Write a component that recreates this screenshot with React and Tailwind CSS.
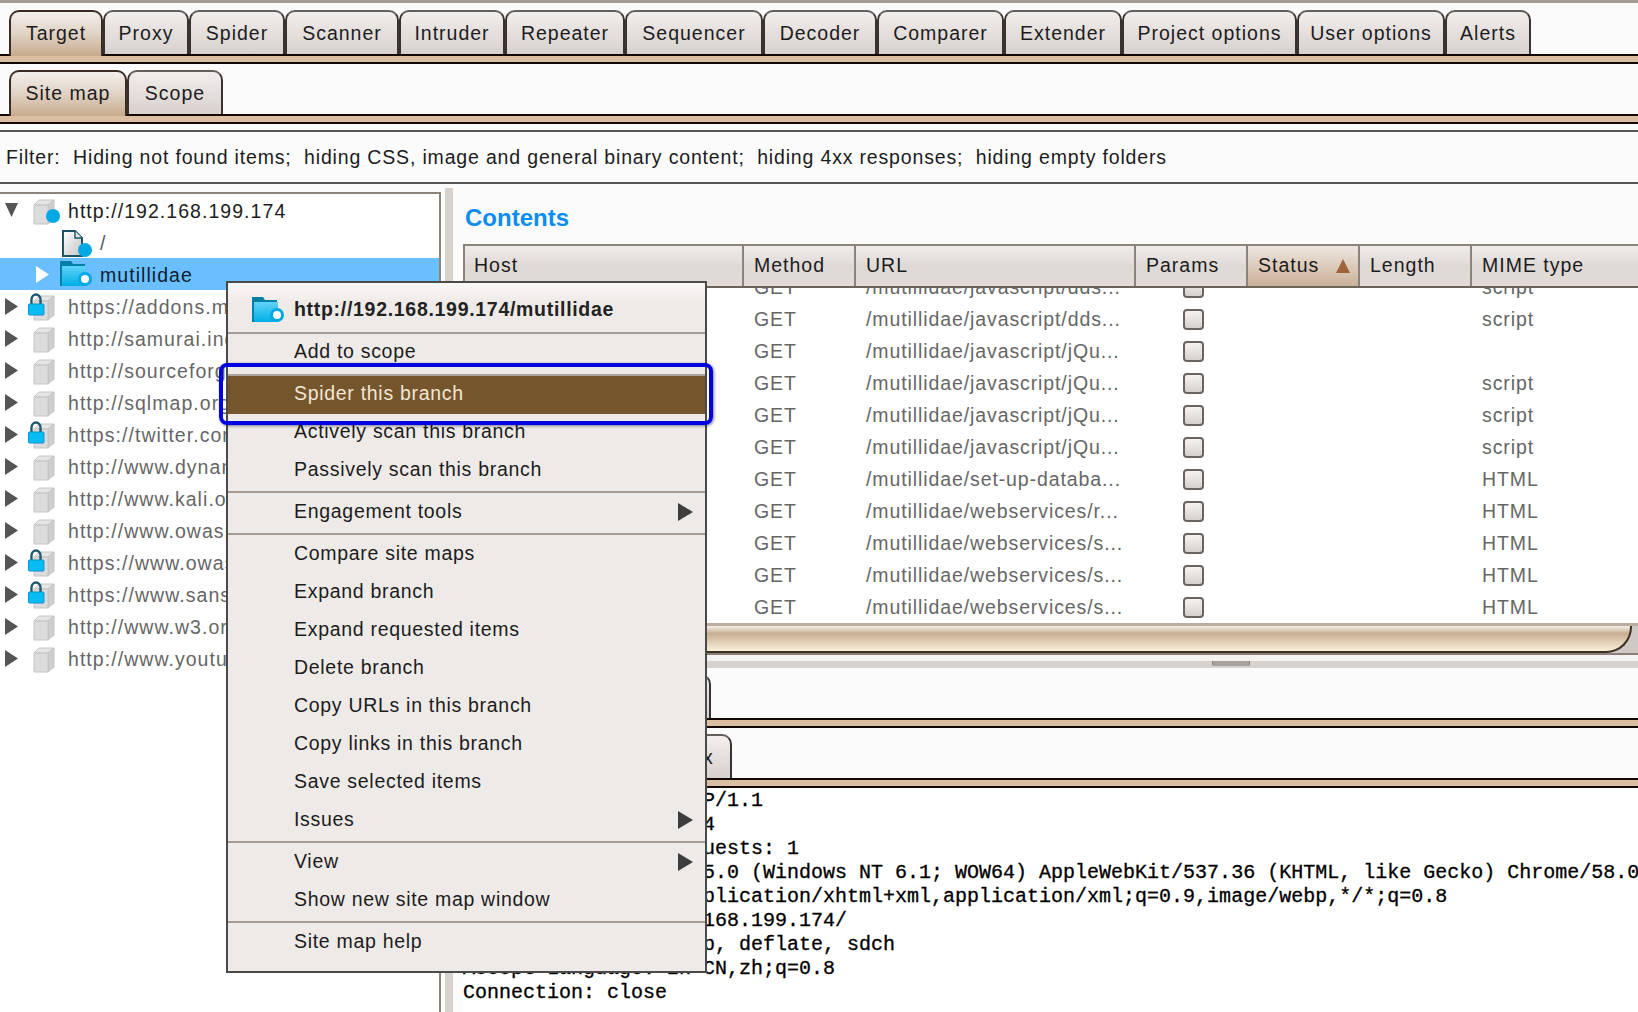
const SANS = "font-['Liberation_Sans',Arial,sans-serif] tracking-[0.7px]";

function Tab({ label, width, active, pad }) {
  return (
    <div
      style={{ width }}
      className={
        "h-[44px] shrink-0 flex items-center rounded-t-[10px] border-x-2 border-t-2 text-[#1c1c1c] text-[19.5px] tracking-[1px] pt-[1px] " +
        (pad ? "pl-[14px] " : "justify-center ") +
        (active
          ? "relative z-10 -mb-[2px] h-[46px] border-[#3a2c22] bg-gradient-to-b from-[#f3efeb] via-[#e0d2c4] to-[#c7aa8d] pb-[2px]"
          : "border-x-[#3a3230] border-t-[#655f5c] bg-gradient-to-b from-[#f1eeec] to-[#d8d1ce]")
      }
    >
      {label}
    </div>
  );
}

function Band() {
  return <div className="h-[10px] shrink-0 border-y-2 border-t-[#140806] border-b-[#140806] bg-[#dcbfa3]" />;
}

function TabStrip({ tabs, pl = 9 }) {
  return (
    <div className="flex items-end" style={{ paddingLeft: pl }}>
      {tabs.map((t) => (
        <Tab key={t.label} {...t} />
      ))}
    </div>
  );
}

function RightArrow({ className = "fill-[#555555]", w = 13, h = 17 }) {
  return (
    <svg width={w} height={h} viewBox="0 0 13 17" preserveAspectRatio="none" className={"shrink-0 " + className}>
      <path d="M0 0 L13 8.5 L0 17 Z" />
    </svg>
  );
}

function DownArrow() {
  return (
    <svg width="13" height="14" viewBox="0 0 13 14" className="shrink-0 fill-[#555555]">
      <path d="M0 0 H13 L6.5 14 Z" />
    </svg>
  );
}

function Cube() {
  return (
    <g stroke="#c4c4c4" strokeWidth="1">
      <path d="M6 11 L11 6 H26 L20 11 Z" fill="#e6e6e6" />
      <path d="M20 11 L26 6 V25 L20 30 Z" fill="#cfcfcf" />
      <path d="M6 11 H20 V30 H6 Z" fill="#dcdcdc" />
    </g>
  );
}

function HostIcon({ kind }) {
  return (
    <svg width="40" height="32" viewBox="0 0 40 32" className="shrink-0">
      <Cube />
      {kind === "dot" && <circle cx="25" cy="22" r="7" fill="#00a9e6" />}
      {kind === "lock" && (
        <g>
          <path d="M3.5 15 V9.5 a4.5 5 0 0 1 9 0 V15" fill="none" stroke="#1f5a72" strokeWidth="2.4" />
          <rect x="0.5" y="14" width="15.5" height="11" rx="1" fill="#08bdf5" stroke="#0a93c4" />
        </g>
      )}
    </svg>
  );
}

function FileIcon() {
  return (
    <svg width="38" height="32" viewBox="0 0 38 32" className="shrink-0">
      <defs>
        <linearGradient id="fg" x1="0" x2="1" y1="0" y2="1">
          <stop offset="0" stopColor="#ffffff" />
          <stop offset="1" stopColor="#c4c4c4" />
        </linearGradient>
      </defs>
      <path d="M1 5 H13 L20 12 V30 H1 Z" fill="url(#fg)" stroke="#1c5466" strokeWidth="2" />
      <path d="M13 5 V12 H20" fill="#e6e6e6" stroke="#1c5466" strokeWidth="1.4" />
      <circle cx="23" cy="24" r="7" fill="#00a9e6" />
    </svg>
  );
}

function FolderIcon() {
  return (
    <svg width="34" height="28" viewBox="0 0 34 28" className="shrink-0">
      <defs>
        <linearGradient id="fo" x1="0" x2="0" y1="0" y2="1">
          <stop offset="0" stopColor="#5fd3f8" />
          <stop offset="1" stopColor="#00aee6" />
        </linearGradient>
      </defs>
      <path d="M0 1 H11 L13 4 H25 V6 H2 V26 H0 Z" fill="#067fa6" />
      <path d="M2 6 H26 V26 H2 Z" fill="url(#fo)" />
      <circle cx="25" cy="19" r="7" fill="#00a9e6" />
      <circle cx="25" cy="19" r="4" fill="#ffffff" />
    </svg>
  );
}

const hosts = [
  ["https://addons.mozilla.org", "lock"],
  ["http://samurai.inguardians.com", ""],
  ["http://sourceforge.net", ""],
  ["http://sqlmap.org", ""],
  ["https://twitter.com", "lock"],
  ["http://www.dynamicdrive.com", ""],
  ["http://www.kali.org", ""],
  ["http://www.owasp.org", ""],
  ["https://www.owasp.org", "lock"],
  ["https://www.sans.org", "lock"],
  ["http://www.w3.org", ""],
  ["http://www.youtube.com", ""],
];

function Tree() {
  return (
    <div className="text-[19.5px] tracking-[1.05px]">
      <div className="h-[32px] flex items-center pl-[5px] text-[#1c1c1c]">
        <DownArrow />
        <div className="w-[10px]" />
        <HostIcon kind="dot" />
        <span className="pt-[3px]">http://192.168.199.174</span>
      </div>
      <div className="h-[32px] flex items-center pl-[62px] text-[#5a5a5a]">
        <FileIcon />
        <span className="pt-[3px]">/</span>
      </div>
      <div className="h-[32px] flex items-center pl-[36px] bg-[#69bfff] text-[#10202c]">
        <RightArrow className="fill-white" />
        <div className="w-[11px]" />
        <div className="w-[40px] shrink-0">
          <FolderIcon />
        </div>
        <span className="pt-[3px]">mutillidae</span>
      </div>
      {hosts.map(([h, k]) => (
        <div key={h} className="h-[32px] flex items-center pl-[5px] text-[#666666] whitespace-nowrap">
          <RightArrow />
          <div className="w-[10px]" />
          <HostIcon kind={k} />
          <span className="pt-[3px]">{h}</span>
        </div>
      ))}
    </div>
  );
}

const columns = ["Host", "Method", "URL", "Params", "Status", "Length", "MIME type"];
const gridCols = "grid grid-cols-[281px_112px_280px_112px_112px_112px_1fr]";

const rows = [
  ["/mutillidae/javascript/dds...", "script"],
  ["/mutillidae/javascript/dds...", "script"],
  ["/mutillidae/javascript/jQu...", ""],
  ["/mutillidae/javascript/jQu...", "script"],
  ["/mutillidae/javascript/jQu...", "script"],
  ["/mutillidae/javascript/jQu...", "script"],
  ["/mutillidae/set-up-databa...", "HTML"],
  ["/mutillidae/webservices/r...", "HTML"],
  ["/mutillidae/webservices/s...", "HTML"],
  ["/mutillidae/webservices/s...", "HTML"],
  ["/mutillidae/webservices/s...", "HTML"],
];

function Table() {
  return (
    <div className="flex flex-col">
      <div className={gridCols + " h-[44px] border-y-2 border-t-[#8c837b] border-b-[#6c635b] text-[19.5px] tracking-[1px] text-[#1c1c1c]"}>
        {columns.map((c, i) => (
          <div
            key={c}
            className={
              "flex items-center justify-between pr-[8px] " +
              (i === 0 ? "border-l-2 border-[#8c837b] pl-[9px] " : "pl-[10px] ") +
              (i < 6 ? "border-r-2 border-[#8c837b] " : "") +
              (c === "Status"
                ? "bg-gradient-to-b from-[#ede6df] to-[#cbb199]"
                : "bg-gradient-to-b from-[#f0edeb] via-[#dfd9d6] to-[#e2dcd9]")
            }
          >
            <span>{c}</span>
            {c === "Status" && (
              <svg width="14" height="14" viewBox="0 0 14 14" className="fill-[#a0643a]">
                <path d="M7 0 L14 14 H0 Z" />
              </svg>
            )}
          </div>
        ))}
      </div>
      <div className="h-[335px] overflow-hidden bg-white text-[19.5px] tracking-[0.9px] text-[#666666]">
        <div className="-mt-[17px]">
          {rows.map(([url, mime], i) => (
            <div key={i} className={gridCols + " h-[32px] items-center"}>
              <div className="pl-[10px] pt-[2px]">http://192.168.199.174</div>
              <div className="pl-[10px] pt-[2px]">GET</div>
              <div className="pl-[10px] pt-[2px] whitespace-nowrap">{url}</div>
              <div className="flex justify-center pl-[2px]">
                <div className="w-[21px] h-[21px] rounded-[4px] border-2 border-[#6a6460] bg-gradient-to-b from-[#f4f2f0] to-[#d8d2ce]" />
              </div>
              <div />
              <div />
              <div className="pl-[10px] pt-[2px]">{mime}</div>
            </div>
          ))}
        </div>
      </div>
      <div className="h-[30px] border-t-[3px] border-[#b9ad9f] bg-[#cfc9c6] pr-[6px]">
        <div className="h-full rounded-br-[26px] border-b-2 border-r-2 border-[#3a2e22] bg-gradient-to-b from-[#f6f0e8] via-[#c8ae92] via-30% to-[#faf0da]" />
      </div>
      <div className="h-[2px] bg-[#8a8078]" />
    </div>
  );
}

const requestLines = [
  "GET /mutillidae/ HTTP/1.1",
  "Host: 192.168.199.174",
  "Upgrade-Insecure-Requests: 1",
  "User-Agent: Mozilla/5.0 (Windows NT 6.1; WOW64) AppleWebKit/537.36 (KHTML, like Gecko) Chrome/58.0.3029.110 Safari/537.36",
  "Accept: text/html,application/xhtml+xml,application/xml;q=0.9,image/webp,*/*;q=0.8",
  "Referer: http://192.168.199.174/",
  "Accept-Encoding: gzip, deflate, sdch",
  "Accept-Language: zh-CN,zh;q=0.8",
  "Connection: close",
];

function MenuItem({ label, arrow }) {
  return (
    <div className="h-[38px] flex items-center justify-between pl-[66px] pr-[12px] pb-[2px]">
      <span>{label}</span>
      {arrow && <RightArrow className="fill-[#3d3d3d]" w={15} h={18} />}
    </div>
  );
}

function Sep() {
  return <div className="h-[2px] bg-[#a39b93] my-[1px]" />;
}

function ContextMenu() {
  return (
    <div className="absolute left-[226px] top-[281px] w-[481px] h-[692px] z-20 border-2 border-[#4a4a4a] bg-[#eeeae7] text-[19.5px] text-[#1c1c1c] overflow-hidden">
      <div className="h-[49px] flex items-center pl-[24px] pt-[4px] bg-gradient-to-b from-[#faf8f7] to-[#eeeae7] to-40% font-bold">
        <div className="w-[42px] shrink-0">
          <FolderIcon />
        </div>
        <span className="text-[#222222]">http://192.168.199.174/mutillidae</span>
      </div>
      <div className="h-[2px] bg-[#a39b93]" />
      <div className="h-[40px] flex items-center pl-[66px] pb-[4px]">Add to scope</div>
      <div className="h-[40px] flex items-center pl-[66px] border-t-2 border-[#aaa29a] bg-[#75552c] text-[#f2e6d6] pb-[3px]">Spider this branch</div>
      <MenuItem label="Actively scan this branch" />
      <MenuItem label="Passively scan this branch" />
      <Sep />
      <MenuItem label="Engagement tools" arrow />
      <Sep />
      <MenuItem label="Compare site maps" />
      <MenuItem label="Expand branch" />
      <MenuItem label="Expand requested items" />
      <MenuItem label="Delete branch" />
      <MenuItem label="Copy URLs in this branch" />
      <MenuItem label="Copy links in this branch" />
      <MenuItem label="Save selected items" />
      <MenuItem label="Issues" arrow />
      <Sep />
      <MenuItem label="View" arrow />
      <MenuItem label="Show new site map window" />
      <Sep />
      <MenuItem label="Site map help" />
    </div>
  );
}

export default function App() {
  return (
    <div className={"relative w-[1638px] h-[1012px] overflow-hidden flex flex-col bg-[#fbfbfb] " + SANS}>
      <div className="h-[3px] shrink-0 bg-[#a39b93]" />
      <div className="h-[7px] shrink-0" />
      <TabStrip
        tabs={[
          { label: "Target", width: 94, active: true },
          { label: "Proxy", width: 86 },
          { label: "Spider", width: 96 },
          { label: "Scanner", width: 114 },
          { label: "Intruder", width: 106 },
          { label: "Repeater", width: 120 },
          { label: "Sequencer", width: 138 },
          { label: "Decoder", width: 114 },
          { label: "Comparer", width: 127 },
          { label: "Extender", width: 118 },
          { label: "Project options", width: 175 },
          { label: "User options", width: 148 },
          { label: "Alerts", width: 86 },
        ]}
      />
      <Band />
      <div className="h-[6px] shrink-0" />
      <TabStrip
        tabs={[
          { label: "Site map", width: 118, active: true },
          { label: "Scope", width: 96 },
        ]}
      />
      <Band />
      <div className="h-[6px] shrink-0" />
      <div className="h-[54px] shrink-0 flex items-center pl-[6px] pt-[2px] border-y-2 border-[#555555] text-[19.5px] tracking-[0.83px] text-[#1c1c1c] whitespace-pre">
        Filter:  Hiding not found items;  hiding CSS, image and general binary content;  hiding 4xx responses;  hiding empty folders
      </div>

      <div className="flex-1 min-h-0 flex pt-[4px]">
        <div className="w-[441px] shrink-0 pt-[4px]">
          <div className="h-full bg-white border-t-2 border-r-2 border-[#8c837b]">
            <Tree />
          </div>
        </div>
        <div className="w-[4px] shrink-0" />
        <div className="w-[8px] shrink-0 bg-[#d8d2ce]" />
        <div className="flex-1 min-w-0 flex flex-col pl-[10px] overflow-hidden">
          <div className="h-[56px] shrink-0 flex items-center pl-[2px] pt-[3px] text-[24px] font-bold tracking-normal text-[#0a8cf0]">Contents</div>
          <Table />
          <div className="shrink-0 -ml-[10px]">
            <div className="h-[6px] bg-[#f4f2f0]" />
            <div className="h-[7px] bg-[#d8d2ce] flex justify-end pr-[388px]">
              <div className="w-[38px] h-[5px] bg-[#aaa29c] rounded-b-[2px] border-x border-[#8a8078]" />
            </div>
          </div>
          <div className="h-[6px] shrink-0" />
          <TabStrip
            pl={0}
            tabs={[
              { label: "Request", width: 120, pad: true, active: true },
              { label: "Response", width: 128, pad: true },
            ]}
          />
          <Band />
          <div className="h-[6px] shrink-0" />
          <TabStrip
            pl={0}
            tabs={[
              { label: "Raw", width: 50, pad: true, active: true },
              { label: "Params", width: 70, pad: true },
              { label: "Headers", width: 77, pad: true },
              { label: "Hex", width: 72, pad: true },
            ]}
          />
          <Band />
          <div className="flex-1 min-h-0 pt-[1px] bg-white font-['Liberation_Mono','Courier_New',monospace] text-[20px] tracking-normal text-black [-webkit-text-stroke:0.3px_black] whitespace-pre overflow-hidden">
            {requestLines.map((l) => (
              <div key={l} className="h-[24px] leading-[24px]">
                {l}
              </div>
            ))}
          </div>
        </div>
      </div>

      <ContextMenu />
      <div className="absolute left-[219px] top-[363px] w-[494px] h-[62px] z-30 rounded-[8px] border-4 border-[#0000e0] shadow-[1px_1px_3px_rgba(0,0,60,0.5)]" />
    </div>
  );
}
